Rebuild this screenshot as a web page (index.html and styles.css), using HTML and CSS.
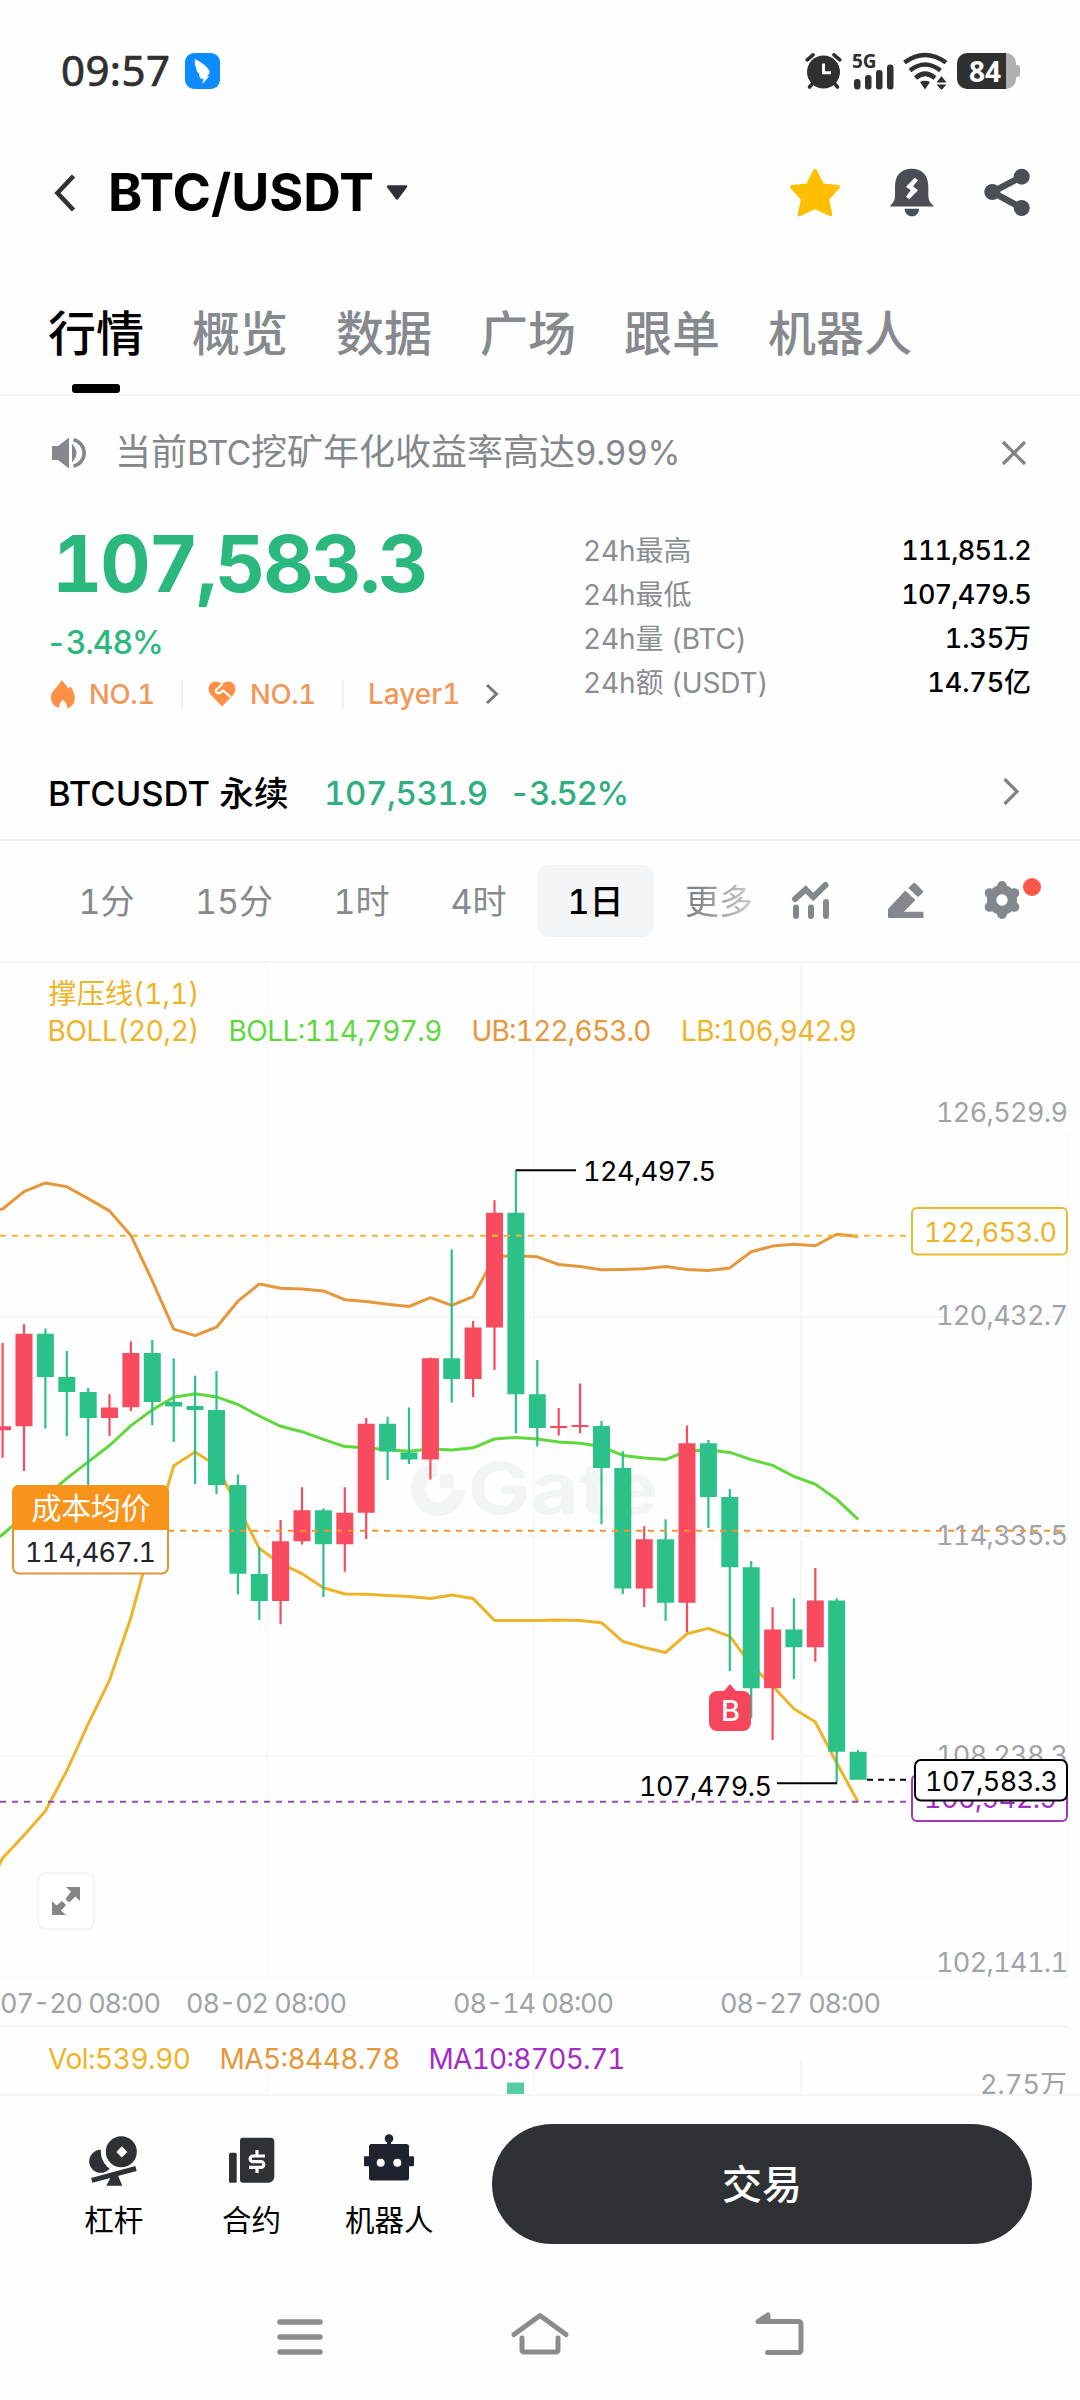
FILE: index.html
```html
<!DOCTYPE html>
<html lang="zh-CN">
<head>
<meta charset="utf-8">
<title>BTC/USDT</title>
<link rel="stylesheet" href="styles.css">
</head>
<body>
<div class="status">
  <span class="clock">09:57</span>
  <svg class="app-badge" width="35" height="36" viewBox="0 0 35 36"><rect width="35" height="36" rx="9" fill="#0c8cff"/><path d="M10 6c6 3 12 7 14.500 12c.8 2.200-1.500 4-2.500 5.500h2.200l-7 7.500l1.300-5.200h-2.700c-1.300-1.600-1.800-3.300-1.600-5c-2.200-1.500-3-3.600-2.800-5.600c-1.500-2.500-2-5.500-1.400-9.200z" fill="#fff"/></svg>
  <div class="status-right">
    <svg width="37" height="38" viewBox="0 0 37 38"><g fill="none" stroke="#303030" stroke-width="3.600" stroke-linecap="round"><path d="M2.200 7.800L8 2.800M34.800 7.800L29 2.800"/><path d="M8 31L4.500 35M29 31L32.500 35"/></g><circle cx="18.500" cy="20" r="16.500" fill="#303030"/><path d="M18.500 11.500V20.800H26" fill="none" stroke="#fff" stroke-width="3"/></svg>
    <svg class="signal" width="44" height="38" viewBox="0 0 44 38"><text x="1" y="15.500" class="net">5G</text><g fill="#303030"><rect x="3" y="27" width="6.500" height="10.500" rx="3"/><rect x="14" y="23" width="6.500" height="14.500" rx="3"/><rect x="25" y="18" width="6.500" height="19.500" rx="3"/><rect x="36" y="12.500" width="6.500" height="25" rx="3"/></g></svg>
    <svg class="wifi" width="45" height="38" viewBox="0 0 45 38"><g fill="none" stroke="#303030" stroke-width="4.600"><path d="M1.500 10.500Q22 -4.500 43 10.500"/><path d="M7 18.500Q22 6.500 37.500 18.500"/><path d="M12.500 26Q22 17.500 32 26"/></g><path d="M17 30Q22 27.500 27 30L22 37.500z" fill="#303030"/><path d="M33.500 30.500L38.500 24l5 6.500zM33.500 32.500h10l-5 5.500z" fill="#303030"/></svg>
    <div class="battery"><span class="level">84</span></div>
  </div>
</div>

<header class="header">
  <svg width="28" height="44" viewBox="0 0 28 44"><path d="M22.500 5L6.500 22L22.500 39" fill="none" stroke="#2f3136" stroke-width="4.600"/></svg>
  <h1 class="pair">BTC/USDT</h1>
  <svg class="caret" width="24" height="18" viewBox="0 0 24 18"><path d="M3 2.500H21L12 14.500z" fill="#2f3136" stroke="#2f3136" stroke-width="2.500" stroke-linejoin="round"/></svg>
  <div class="header-actions">
    <svg width="56" height="56" viewBox="0 0 56 56"><path d="M28 6L35.200 20.400L51 22L40 34L43.300 49.300L28 42L12.700 49.300L16 34L5 22L20.800 20.400z" fill="#ffbf00" stroke="#ffbf00" stroke-width="4" stroke-linejoin="round"/></svg>
    <svg width="48" height="56" viewBox="0 0 48 56"><path d="M7 22C7 10 13 3.700 23.700 3.700S40.300 10 40.300 22V30C40.300 35 42 37.500 45.300 40.500V41.500H2.300V40.500C5.500 37.500 7 35 7 30z" fill="#4b4e55"/><path d="M16.700 43.700H31C31 48.500 28 51.300 24 51.300S16.700 48.500 16.700 43.700z" fill="#4b4e55"/><path d="M26.700 12.700L18 21.700L22.700 25.300L18 31.700L21.300 34.300L30 25.300L25 21.300L30 15.300z" fill="#fff"/></svg>
    <svg width="50" height="56" viewBox="0 0 50 56"><path d="M40.700 11.700L11.300 27L40.700 43" fill="none" stroke="#4b4e55" stroke-width="6.500"/><g fill="#4b4e55"><circle cx="11.300" cy="27" r="8"/><circle cx="40.700" cy="11.700" r="8"/><circle cx="40.700" cy="43" r="8"/></g></svg>
  </div>
</header>

<nav class="tabs">
  <span class="tab active">行情</span><span class="tab">概览</span><span class="tab">数据</span><span class="tab">广场</span><span class="tab">跟单</span><span class="tab">机器人</span>
</nav>

<div class="notice">
  <svg width="38" height="34" viewBox="0 0 38 34"><path d="M1 10H7L18 1.500V32.500L7 24H1z" fill="#84878c"/><path d="M22 10.500Q27 17 22 23.500z" fill="#84878c" stroke="#84878c" stroke-width="2"/><path d="M22.500 3.800A13.500 13.500 0 0 1 22.500 30.200" fill="none" stroke="#84878c" stroke-width="3.600"/></svg>
  <p class="notice-text">当前<span class="latin">BTC</span>挖矿年化收益率高达<span class="latin">9.99%</span></p>
  <svg class="close" width="28" height="28" viewBox="0 0 28 28"><path d="M3 3L25 25M25 3L3 25" stroke="#808388" stroke-width="3.200"/></svg>
</div>

<section class="quote">
  <div class="quote-main">
    <div class="last">107,583.3</div>
    <div class="change">-3.48%</div>
    <div class="tags">
      <svg width="26" height="30" viewBox="0 0 26 30"><path d="M11.500 1C13.500 4 16 5 18 9.500Q20 9 20 7C24 12 25.500 17 24.500 21.500C23.500 26 20.500 28.500 17 29Q17.500 24.500 13 21Q8.500 24.500 9 29C4 27.500 1 24 1 18.500C1 11 8 9 11.500 1z" fill="#ff8f45"/></svg>
      <span class="tag">NO.1</span><i class="sep"></i>
      <svg width="30" height="28" viewBox="0 0 30 28"><path d="M15 26.500L3.500 14.500C-.5 9 2 2 8.500 1.500Q12.500 1.500 15 4Q17.500 1.500 21.500 1.500C28 2 30.500 9 26.500 14.500z" fill="#ff8f45"/><path d="M15.500 4L9 10Q8.500 14 13 13L16 10.500L23.500 17" fill="none" stroke="#fff" stroke-width="2.300"/></svg>
      <span class="tag">NO.1</span><i class="sep"></i>
      <span class="tag layer">Layer1</span>
      <svg class="more" width="16" height="24" viewBox="0 0 16 24"><path d="M3 3L12.500 12L3 21" fill="none" stroke="#74777c" stroke-width="3"/></svg>
    </div>
  </div>
  <dl class="stats">
    <div class="stat"><dt>24h最高</dt><dd>111,851.2</dd></div>
    <div class="stat"><dt>24h最低</dt><dd>107,479.5</dd></div>
    <div class="stat"><dt>24h量 (BTC)</dt><dd class="unit">1.35万</dd></div>
    <div class="stat"><dt>24h额 (USDT)</dt><dd class="unit">14.75亿</dd></div>
  </dl>
</section>

<div class="perp">
  <span class="perp-name">BTCUSDT 永续</span>
  <span class="perp-price">107,531.9</span>
  <span class="perp-change">-3.52%</span>
  <svg class="perp-arrow" width="20" height="32" viewBox="0 0 20 32"><path d="M3.500 3L16 15.500L3.500 28" fill="none" stroke="#808388" stroke-width="3.200"/></svg>
</div>

<div class="intervals">
  <span class="iv">1分</span><span class="iv wide">15分</span><span class="iv">1时</span><span class="iv">4时</span><span class="iv on">1日</span><span class="iv-more">更多</span>
  <div class="tools">
    <svg width="42" height="44" viewBox="0 0 42 44"><g fill="none" stroke="#84878c" stroke-width="6" stroke-linecap="round"><path d="M5 20L15.700 10.300L23.300 18L35.500 6" stroke-linejoin="miter"/><path d="M6 28.500V37M21 28.500V37M36 23V37"/></g></svg>
    <svg width="42" height="44" viewBox="0 0 42 44"><g fill="#84878c" stroke="#84878c" stroke-width="2" stroke-linejoin="round"><path d="M3 30.500L19.300 13L28 21L15.500 33.700H36.500V38H3z"/><path d="M23.700 9L28.300 4.700L36.300 12.700L32 16.700z"/></g></svg>
    <div class="gear"><svg width="42" height="44" viewBox="0 0 42 44"><g fill="#84878c"><circle cx="20" cy="21" r="15"/><circle cx="20" cy="6.800" r="4.800"/><circle cx="32.500" cy="14" r="4.800"/><circle cx="32.500" cy="28" r="4.800"/><circle cx="20" cy="35.200" r="4.800"/><circle cx="7.500" cy="28" r="4.800"/><circle cx="7.500" cy="14" r="4.800"/></g><circle cx="20" cy="21" r="5.700" fill="#fff"/></svg><i class="dot"></i></div>
  </div>
</div>

<svg class="chart" width="1080" height="1131" viewBox="0 963 1080 1131">
  <path class="grid" d="M267 963V1977M534 963V1977M801 963V1977M1067 1130V1977M267 2060V2094M534 2060V2094M801 2060V2094M0 1317H1067M0 1536.500H1067M0 1756H1067M0 1977H1067"/>
  <path class="grid strong" d="M0 2026.500H1068"/>

  <g class="watermark"><path class="ring" d="M437.500 1469A20 20 0 1 0 458 1489.500"/><path d="M440 1474h14v14h-14z"/><text x="468" y="1514" textLength="190" lengthAdjust="spacingAndGlyphs">Gate</text></g>

  <polyline class="band upper" points="-2,1209.600 2.600,1209 24,1191.700 45.400,1182.900 66.800,1186.800 88.200,1198.600 109.500,1210.900 130.900,1235.400 152.300,1280.900 173.700,1329.100 195.100,1335.600 216.500,1327.200 237.900,1301.200 259.300,1284 280.600,1288.200 302,1289 323.400,1290.900 344.800,1299.700 366.200,1301.600 387.600,1304.300 409,1306.500 430.400,1297.700 451.700,1305.400 473.100,1296.600 494.500,1256.800 515.900,1255.700 537.300,1256.800 558.700,1264.500 580.100,1266.400 601.500,1269.800 622.800,1269.400 644.200,1268.700 665.600,1266.400 687,1269.400 708.400,1270.600 729.800,1267.900 751.200,1251.800 772.600,1246.100 793.900,1244.200 815.300,1245.700 836.700,1234.200 858.100,1236.500"/>
  <polyline class="band middle" points="-2,1538 2.600,1534.500 24,1516 45.400,1497 66.800,1478.400 88.200,1461.900 109.500,1445.500 130.900,1425.600 152.300,1409.900 173.700,1397.300 195.100,1393.800 216.500,1396.900 237.900,1404.500 259.300,1416 280.600,1426.300 302,1431.700 323.400,1439.400 344.800,1446.600 366.200,1447.800 387.600,1449.700 409,1451.200 430.400,1448.900 451.700,1450.100 473.100,1447.800 494.500,1439 515.900,1437.400 537.300,1439 558.700,1442 580.100,1443.200 601.500,1446.600 622.800,1455.400 644.200,1458.100 665.600,1459.600 687,1451 708.400,1450.100 729.800,1452.400 751.200,1459.600 772.600,1465.400 793.900,1476.500 815.300,1484.100 836.700,1499.400 858.100,1519.300"/>
  <polyline class="band lower" points="-2,1867 2.600,1858.300 24,1835.300 45.400,1811 66.800,1770.700 88.200,1724 109.500,1680.300 130.900,1617.700 152.300,1539 173.700,1465.800 195.100,1452 216.500,1465.800 237.900,1506.700 259.300,1548.400 280.600,1563.700 302,1573.700 323.400,1587.800 344.800,1594 366.200,1594.300 387.600,1595.500 409,1596.600 430.400,1598.600 451.700,1595.100 473.100,1598.600 494.500,1620.400 515.900,1620.400 537.300,1620.400 558.700,1620 580.100,1620.400 601.500,1622.700 622.800,1641.400 644.200,1647.500 665.600,1652.500 687,1633.800 708.400,1628.400 729.800,1636.400 751.200,1665 772.600,1686 793.900,1708.700 815.300,1722 836.700,1763 858.100,1802"/>

  <path class="wick down" d="M45.400 1328.600V1428.600M66.800 1351V1436.300M88.200 1388V1486M152.300 1339.900V1425.200M173.700 1358.200V1442M195.100 1375.800V1484.100M216.500 1370.900V1494.100M237.900 1474.600V1594.400M259.300 1546.900V1620M323.400 1508.600V1597M387.600 1416.800V1479.900M409 1407.600V1463.900M451.700 1249.200V1402.600M515.900 1170.300V1433.200M537.300 1360.100V1446.600M601.500 1421V1524.300M622.800 1451.200V1594M665.600 1519.300V1620.800M708.400 1440.100V1528.100M729.800 1489.100V1671M751.200 1561V1718.300M793.900 1598.200V1679.300M836.700 1598.200V1783.300M858.100 1750V1760"/>
  <path class="wick up" d="M2.600 1342.900V1457.700M24 1324.200V1471.100M109.500 1394.200V1435.900M130.900 1341.400V1411M280.600 1520.100V1624.200M302 1487.200V1544.600M344.800 1487.200V1571.800M366.200 1417.900V1538.900M430.400 1357.500V1479.500M473.100 1321.100V1396.900M494.500 1200.200V1370.100M558.700 1408V1435.500M580.100 1383.500V1433.200M644.200 1526.200V1607M687 1425.600V1632.200M772.600 1607.300V1740M815.300 1567.900V1661.700"/>
  <path class="body down" d="M45.400 1333.700V1377M66.800 1377V1391.900M88.200 1391.900V1417.900M152.300 1352.900V1401.900M173.700 1401.900V1406.400M195.100 1406.100V1409.900M216.500 1409.900V1484.900M237.900 1484.900V1573.700M259.300 1574.100V1600.900M323.400 1510.200V1544.200M387.600 1423.700V1451.600M409 1452.400V1459.600M451.700 1358.200V1378.900M515.900 1212.800V1394.200M537.300 1394.200V1427.900M601.500 1426V1468.100M622.800 1468.100V1588.600M665.600 1539.200V1602.800M708.400 1443.200V1497.100M729.800 1497.100V1567.200M751.200 1567.200V1688.300M793.900 1629.500V1647.200M836.700 1600.500V1751.700M858.100 1751.700V1779.700"/>
  <path class="body up" d="M2.600 1426.300V1430.200M24 1333.700V1426.300M109.500 1407.600V1417.900M130.900 1352.900V1407.200M280.600 1541.200V1600.900M302 1510.200V1541.200M344.800 1512.800V1544.200M366.200 1423.700V1512.800M430.400 1358.200V1459.600M473.100 1327.600V1378.900M494.500 1212.800V1327.600M558.700 1426V1428M580.100 1425V1427M644.200 1539.200V1588.600M687 1443.200V1602.800M772.600 1629.500V1688.300M815.300 1600.500V1647.200"/>

  <path class="dash gold" d="M0 1235.800H907"/>
  <path class="dash purple" d="M0 1801.700H907"/>
  <path class="dash black" d="M867 1779.700H911"/>
  <path class="callout" d="M515.900 1170.300H576M777 1783.300H837"/>

  <g class="legend">
    <text x="48.500" y="1004" fill="#eeb429" textLength="151">撑压线(1,1)</text>
    <text x="47.500" y="1041" fill="#eeb429" textLength="152">BOLL(20,2)</text>
    <text x="228.500" y="1041" fill="#5fd83b" textLength="214">BOLL:114,797.9</text>
    <text x="471.500" y="1041" fill="#e6973a" textLength="180">UB:122,653.0</text>
    <text x="681" y="1041" fill="#eeb429" textLength="176">LB:106,942.9</text>
    <text x="48" y="2069" fill="#eeb429" textLength="143">Vol:539.90</text>
    <text x="219.500" y="2069" fill="#e6973a" textLength="181">MA5:8448.78</text>
    <text x="428.500" y="2069" fill="#a32cc4" textLength="197">MA10:8705.71</text>
  </g>

  <g class="axis">
    <text x="936" y="1122" textLength="132">126,529.9</text>
    <text x="936" y="1325" textLength="132">120,432.7</text>
    <text x="936" y="1544.500" textLength="132">114,335.5</text>
    <text x="936" y="1765" textLength="132">108,238.3</text>
    <text x="936" y="1971.500" textLength="132">102,141.1</text>
    <text x="980" y="2094" textLength="87">2.75万</text>
    <text x="0" y="2012.500" textLength="161">07-20 08:00</text>
    <text x="186" y="2012.500" textLength="161">08-02 08:00</text>
    <text x="453" y="2012.500" textLength="161">08-14 08:00</text>
    <text x="720" y="2012.500" textLength="161">08-27 08:00</text>
  </g>
  <path class="dash orange" d="M168 1530.800H1066"/>

  <g class="note">
    <text x="583" y="1181" textLength="133">124,497.5</text>
    <text x="639" y="1795.500" textLength="133">107,479.5</text>
  </g>

  <rect class="box" x="912" y="1208" width="155" height="46.500" rx="5" stroke="#e8bb2c"/>
  <text class="boxed" x="924" y="1241.500" fill="#eeb429" textLength="133">122,653.0</text>
  <rect class="box" x="912" y="1775" width="155" height="46" rx="5" stroke="#a236c0"/>
  <text class="boxed" x="924" y="1807.500" fill="#a32cc4" textLength="133">106,942.9</text>
  <rect class="box" x="915" y="1760" width="152" height="40.500" rx="6" stroke="#000"/>
  <text class="boxed" x="925" y="1791" fill="#000" textLength="133">107,583.3</text>

  <rect class="box" x="13" y="1486" width="155" height="87.500" rx="6" stroke="#e39335"/>
  <path d="M12 1530V1492a7 7 0 0 1 7-7H162a7 7 0 0 1 7 7V1530z" fill="#f8941c"/>
  <text class="cost" x="31.500" y="1519" textLength="119">成本均价</text>
  <text class="boxed" x="25" y="1561.500" fill="#1f232b" textLength="131">114,467.1</text>

  <path d="M717 1691H724L730 1684L736 1691H743a8 8 0 0 1 8 8V1723a8 8 0 0 1-8 8H717a8 8 0 0 1-8-8V1699a8 8 0 0 1 8-8z" fill="#f6465d"/>
  <text class="marker" x="730.500" y="1721">B</text>

  <rect x="38" y="1873" width="56" height="56" rx="8" fill="#fff" stroke="#f5f5f6" stroke-width="2.500"/>
  <path d="M66 1887H80V1901L75.500 1896.500L69 1902.500L65.500 1899L71 1891.500zM52 1901L56.500 1905.500L62 1901L66 1905L61 1910.500L66 1915H52z" fill="#858585"/>
  <rect x="507" y="2082.500" width="17" height="12" fill="#55cda1"/>
</svg>

<footer class="actions">
  <div class="act"><svg width="54" height="58" viewBox="0 0 54 58"><circle cx="13.700" cy="29.300" r="11.500" fill="#2f3135"/><circle cx="34.300" cy="19.700" r="20.500" fill="#fff"/><circle cx="34.300" cy="19.700" r="15.500" fill="#2f3135"/><path d="M34.800 14.200L40.300 19.900L34.800 25.600L29.300 19.900z" fill="#fff"/><path d="M0 46L52 31V36L0 51z" fill="#fff"/><path d="M4.700 48.300L49 36.500" stroke="#2f3135" stroke-width="5"/><path d="M24.500 43.500H31L35.300 53.700H19.300z" fill="#2f3135"/></svg><span>杠杆</span></div>
  <div class="act"><svg width="50" height="58" viewBox="0 0 50 58"><g fill="#2f3135"><rect x="2" y="20.700" width="7.700" height="30" rx="1.500"/><path d="M16 5.700H43.300a4 4 0 0 1 4 4V44.700a6 6 0 0 1-6 6H16a3 3 0 0 1-3-3V8.700a3 3 0 0 1 3-3z"/></g><path d="M38 24H26a2.850 2.850 0 0 0 0 5.700H34a2.850 2.850 0 0 1 0 5.700H22M30 18V24M30 35.400V41" fill="none" stroke="#fff" stroke-width="3.200"/></svg><span>合约</span></div>
  <div class="act"><svg width="52" height="58" viewBox="0 0 52 58"><g fill="#20222f"><circle cx="26" cy="6.500" r="4.300"/><rect x="24" y="8" width="4" height="6"/><rect x="6" y="12" width="40" height="36.500" rx="2.500"/><rect x="1" y="24.300" width="50" height="10" rx="1"/></g><g fill="#fff"><circle cx="17.700" cy="30.700" r="4"/><circle cx="34.300" cy="30.700" r="4"/></g></svg><span>机器人</span></div>
  <button class="trade">交易</button>
</footer>

<div class="sysnav">
  <svg width="60" height="60" viewBox="0 0 60 60"><path d="M10 16H50M10 31H50M10 46H50" stroke="#8c8c8c" stroke-width="5.500" stroke-linecap="round"/></svg>
  <svg width="60" height="60" viewBox="0 0 60 60"><path d="M4 28.500L30 9.500L56 28.500M12 32V43.500Q12 46 14.500 46H45.500Q48 46 48 43.500V32" fill="none" stroke="#8c8c8c" stroke-width="5" stroke-linecap="round" stroke-linejoin="round"/></svg>
  <svg width="60" height="60" viewBox="0 0 60 60"><path d="M17.500 46.500H48Q51 46.500 51 43.500V18.500Q51 15.500 48 15.500H8L18 9V15" fill="none" stroke="#8c8c8c" stroke-width="5" stroke-linecap="round" stroke-linejoin="round"/></svg>
</div>
</body>
</html>
```
FILE: styles.css
```css
* { box-sizing: border-box; }
body {
  margin: 0;
  width: 1080px;
  height: 2400px;
  overflow: hidden;
  background: #fefefe;
  color: #000;
  font-family: Inter, "Noto Sans CJK SC", sans-serif;
  font-feature-settings: "tnum";
  white-space: nowrap;
}
svg { display: block; flex: none; }
h1, p, dl, dd { margin: 0; }

.status { display: flex; align-items: center; height: 141px; padding: 0 64px 0 61px; }
.clock { margin-top: -2px; font: 400 42px/60px "Noto Sans", sans-serif; color: #303030; width: 124px; letter-spacing: .4px; -webkit-text-stroke: .7px #303030; }
.status-right { display: flex; align-items: center; margin-left: auto; }
.signal { margin-left: 9px; overflow: visible; }
.net { font: 700 19px "Noto Sans", sans-serif; fill: #303030; }
.wifi { margin: 0 9px 0 8px; }
.battery { position: relative; width: 59px; height: 36px; border-radius: 10px; background: linear-gradient(90deg, #303030 49px, #b0b0b0 49px); }
.battery::after { content: ""; position: absolute; left: 58px; top: 12px; width: 5px; height: 12px; border-radius: 0 3px 3px 0; background: #b0b0b0; }
.level { display: block; padding-left: 12px; font: 700 28px/36px "Noto Sans", sans-serif; color: #fff; }

.header { display: flex; align-items: center; height: 103px; padding: 0 49px 0 51px; }
.pair { margin-left: 29px; font-size: 52px; font-weight: 700; line-height: 60px; }
.caret { margin-left: 11px; }
.header-actions { display: flex; gap: 45px; margin-left: auto; }

.tabs { display: flex; gap: 48px; height: 152px; padding: 58px 48px 0; border-bottom: 2px solid #f5f5f6; }
.tab { position: relative; font-size: 48px; font-weight: 500; line-height: 64px; color: #86898e; }
.tab.active { color: #000; }
.tab.active::after { content: ""; position: absolute; left: 24px; top: 82px; width: 48px; height: 9px; border-radius: 3px; background: #000; }

.notice { display: flex; align-items: center; height: 113px; padding: 0 52px 0 51px; color: #84878c; }
.notice-text { margin-left: 26px; font-size: 36px; line-height: 50px; }
.notice .latin { font-size: 33.500px; letter-spacing: -.4px; }
.close { margin-left: auto; }

.quote { display: flex; height: 213px; padding: 0 49px 0 48px; }
.quote-main { width: 535px; color: #2bb87e; }
.last { height: 109px; margin-left: 4px; font-size: 78px; font-weight: 700; line-height: 109px; letter-spacing: -2.300px; }
.change { height: 48px; margin-left: -2px; font-size: 32px; font-weight: 500; line-height: 50px; letter-spacing: -1.100px; }
.tags { display: flex; align-items: center; height: 56px; padding-left: 2px; color: #ef985a; }
.tag { margin-left: 13px; width: 66px; font-size: 27.500px; font-weight: 500; letter-spacing: -.3px; }
.sep { width: 2px; height: 29px; margin: 0 24px 0 26px; background: #f1f1f2; }
.tag.layer { margin-left: 0; width: 92px; font-size: 28px; letter-spacing: 0; }
.more { margin-left: 24px; }
.stats { flex: 1; padding-top: 20px; }
.stat { display: flex; justify-content: space-between; height: 44px; line-height: 44px; }
.stat dt { font-size: 28px; color: #8a8d92; letter-spacing: -.1px; }
.stat dd { font-size: 27px; font-weight: 500; letter-spacing: -.8px; }
.stat dd.unit { letter-spacing: -.1px; }

.perp { display: flex; height: 119px; padding: 51px 59px 0 48px; border-bottom: 2px solid #f5f5f6; font-size: 34px; line-height: 40px; }
.perp-name { width: 276px; font-size: 34.600px; font-weight: 500; }
.perp-price, .perp-change { color: #2fae7e; font-size: 33px; font-weight: 500; letter-spacing: -.4px; }
.perp-price { width: 185px; }
.perp-change { letter-spacing: -1.400px; }
.perp-arrow { margin: 3px 0 0 auto; }

.intervals { display: flex; align-items: center; height: 122px; padding: 0 54px 0 48px; border-bottom: 2px solid #f5f5f6; font-size: 34px; color: #86898e; }
.iv { width: 117px; height: 72px; line-height: 74px; text-align: center; border-radius: 12px; }
.iv.wide { width: 138px; }
.iv.on { background: #f3f5f6; color: #000; font-weight: 500; }
.iv-more { margin-left: 31px; width: 76px; line-height: 44px; padding-top: 2px; color: transparent; background: linear-gradient(90deg, #808388 10px, #d5d6d8 74px); -webkit-background-clip: text; background-clip: text; }
.tools { display: flex; gap: 54px; margin-left: 29px; }
.gear { position: relative; }
.dot { position: absolute; left: 41px; top: -1px; width: 18px; height: 18px; border-radius: 50%; background: #fb5649; }

.chart { font-size: 27px; }
.grid { fill: none; stroke: #f7f8f8; stroke-width: 2; }
.grid.strong { stroke: #f1f2f2; }
.watermark { fill: #f3f4f4; }
.ring { fill: none; stroke: #f3f4f4; stroke-width: 14; }
.watermark text { font-size: 72px; font-weight: 700; }
.band { fill: none; stroke-width: 3; stroke-linejoin: round; }
.upper { stroke: #e6973a; }
.middle { stroke: #5fd83b; }
.lower { stroke: #eeb429; }
.wick { fill: none; stroke-width: 2.200; }
.body { fill: none; stroke-width: 17; }
.up { stroke: #f84b60; }
.down { stroke: #2cc189; }
.dash { fill: none; stroke-width: 2; stroke-dasharray: 6 6; }
.gold { stroke: #f0b832; }
.purple { stroke: #9349b0; }
.black { stroke: #000; stroke-dasharray: 6 5; }
.orange { stroke: #ee9433; }
.callout { fill: none; stroke: #000; stroke-width: 2; }
.legend { font-size: 28px; }
.axis { fill: #a0a3a7; }
.box { fill: #fff; stroke-width: 2; }
.cost { font-size: 30px; fill: #fff; }
.marker { font-size: 29px; font-weight: 500; fill: #fff; text-anchor: middle; }

.actions { display: flex; height: 186px; padding: 28px 48px 0 45px; border-top: 2px solid #f4f4f5; }
.act { display: flex; flex-direction: column; align-items: center; width: 137.700px; padding-top: 8px; }
.act span { margin-top: 10px; font-size: 29.500px; line-height: 40px; }
.trade { margin: 0 0 0 auto; width: 540px; height: 120px; border: 0; border-radius: 60px; background: #2f3135; color: #fff; font: 500 40px/120px Inter, "Noto Sans CJK SC", sans-serif; }

.sysnav { display: flex; justify-content: center; gap: 180px; height: 120px; padding-top: 26px; }
```
